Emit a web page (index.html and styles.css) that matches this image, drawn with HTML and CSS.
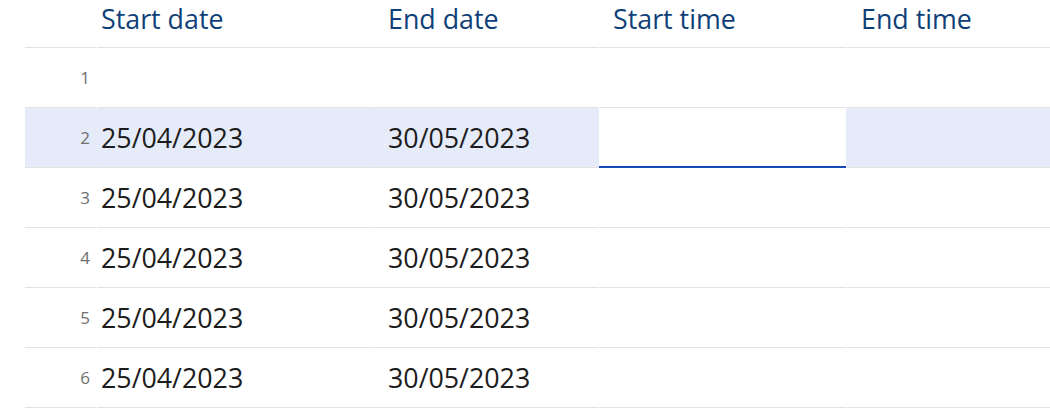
FILE: index.html
```html
<!DOCTYPE html>
<html>
<head>
<meta charset="utf-8">
<link rel="stylesheet" href="styles.css">
</head>
<body>
<div class="grid">
  <div class="row head">
    <div class="cell num"></div>
    <div class="cell first">Start date</div>
    <div class="cell">End date</div>
    <div class="cell">Start time</div>
    <div class="cell">End time</div>
  </div>
  <div class="row">
    <div class="cell num">1</div>
    <div class="cell first"></div>
    <div class="cell"></div>
    <div class="cell"></div>
    <div class="cell"></div>
  </div>
  <div class="row selected">
    <div class="cell num">2</div>
    <div class="cell first">25/04/2023</div>
    <div class="cell">30/05/2023</div>
    <div class="cell editing"></div>
    <div class="cell"></div>
  </div>
  <div class="row">
    <div class="cell num">3</div>
    <div class="cell first">25/04/2023</div>
    <div class="cell">30/05/2023</div>
    <div class="cell"></div>
    <div class="cell"></div>
  </div>
  <div class="row">
    <div class="cell num">4</div>
    <div class="cell first">25/04/2023</div>
    <div class="cell">30/05/2023</div>
    <div class="cell"></div>
    <div class="cell"></div>
  </div>
  <div class="row">
    <div class="cell num">5</div>
    <div class="cell first">25/04/2023</div>
    <div class="cell">30/05/2023</div>
    <div class="cell"></div>
    <div class="cell"></div>
  </div>
  <div class="row">
    <div class="cell num">6</div>
    <div class="cell first">25/04/2023</div>
    <div class="cell">30/05/2023</div>
    <div class="cell"></div>
    <div class="cell"></div>
  </div>
</div>
</body>
</html>
```

FILE: styles.css
```css
html, body {
  margin: 0;
  padding: 0;
  background: #ffffff;
}

body {
  font-family: "Open Sans", "Noto Sans", sans-serif;
  overflow: hidden;
}

.grid {
  margin-left: 25px;
  width: 1025px;
}

.row {
  display: grid;
  grid-template-columns: 71px 276px 224px 247px 1fr;
  column-gap: 1px;
  height: 60px;
}

.cell {
  border-bottom: 1px solid #e2e2e2;
  padding-left: 14px;
  display: flex;
  align-items: center;
  font-size: 26.8px;
  color: #1c1c1c;
  box-sizing: border-box;
  min-width: 0;
}

.cell.first {
  padding-left: 4px;
}

.cell.num {
  justify-content: flex-end;
  padding-left: 0;
  padding-right: 6px;
  font-size: 17px;
  color: #707070;
}

.row.head {
  height: 48px;
}

.row.head .cell {
  align-items: flex-start;
  line-height: normal;
  color: #0f3f78;
}

.row.selected {
  background: #e5ebf8;
}

.row.selected .cell.editing {
  background: #ffffff;
  border-bottom: 2px solid #1549b5;
}
```
